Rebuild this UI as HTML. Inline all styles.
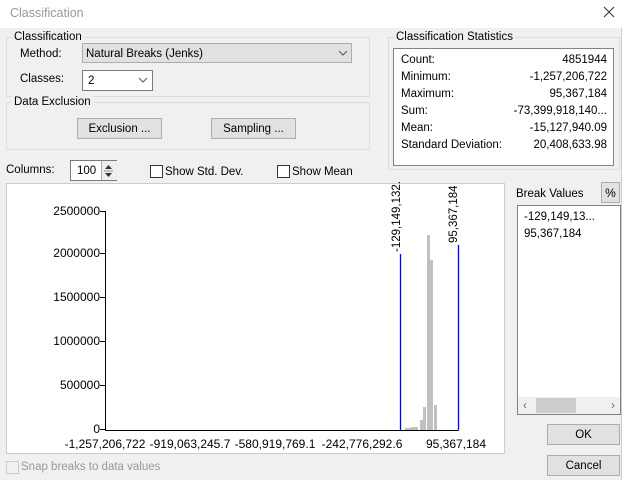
<!DOCTYPE html><html><head><style>
body{margin:0;width:630px;height:480px;background:#f0f0f0;font-family:"Liberation Sans",sans-serif;font-size:11px;color:#000;position:relative;overflow:hidden}
.a{position:absolute}
.grp{position:absolute;border:1px solid #dcdcdc}
.lg{position:absolute;background:#f0f0f0;padding:0 2px;font-size:11.5px}
.btn{position:absolute;background:#e1e1e1;border:1px solid #adadad;text-align:center;box-sizing:border-box;font-size:11.5px}
.cb{position:absolute;width:11px;height:11px;border:1px solid #333;background:#fff}
</style></head><body>
<div class="a" style="left:0;top:0;width:630px;height:28px;background:#fff"></div>
<div class="a" style="left:10px;top:6px;font-size:12.5px;color:#999">Classification</div>
<svg class="a" style="left:603px;top:6px" width="12" height="12"><path d="M1 1L11 11M11 1L1 11" stroke="#444" stroke-width="1.2"/></svg>
<div class="a" style="left:621px;top:28px;width:9px;height:452px;background:#fff;border-left:1px solid #ccc"></div>

<div class="grp" style="left:6px;top:37px;width:362px;height:58px"></div>
<div class="lg" style="left:12px;top:31px">Classification</div>
<div class="a" style="left:20px;top:48px;font-size:11.5px">Method:</div>
<div class="a" style="left:82px;top:43px;width:270px;height:20px;background:#e1e1e1;border:1px solid #adadad;box-sizing:border-box;padding:4px 3px;font-size:11.5px">Natural Breaks (Jenks)</div>
<svg class="a" style="left:338px;top:50px" width="10" height="6"><path d="M1 1L5 5L9 1" stroke="#555" fill="none"/></svg>
<div class="a" style="left:20px;top:73px;font-size:11.5px">Classes:</div>
<div class="a" style="left:82px;top:70px;width:71px;height:21px;background:#fff;border:1px solid #7a7a7a;box-sizing:border-box;padding:4px 5px;font-size:11.5px">2</div>
<svg class="a" style="left:138px;top:77px" width="10" height="6"><path d="M1 1L5 5L9 1" stroke="#555" fill="none"/></svg>

<div class="grp" style="left:6px;top:102px;width:362px;height:46px"></div>
<div class="lg" style="left:12px;top:96px">Data Exclusion</div>
<div class="btn" style="left:77px;top:118px;width:85px;height:21px;padding-top:4px">Exclusion ...</div>
<div class="btn" style="left:211px;top:118px;width:85px;height:21px;padding-top:4px">Sampling ...</div>

<div class="grp" style="left:388px;top:37px;width:230px;height:131px"></div>
<div class="lg" style="left:394px;top:31px">Classification Statistics</div>
<div class="a" style="left:393px;top:48px;width:221px;height:118px;background:#fff;border:1px solid #828282;box-sizing:border-box;font-size:11.5px;line-height:17px">
<div class="a" style="left:7px;top:3px">Count:<br>Minimum:<br>Maximum:<br>Sum:<br>Mean:<br>Standard Deviation:</div>
<div class="a" style="right:6px;top:3px;text-align:right">4851944<br>-1,257,206,722<br>95,367,184<br>-73,399,918,140...<br>-15,127,940.09<br>20,408,633.98</div>
</div>

<div class="a" style="left:6px;top:164px;font-size:11.5px">Columns:</div>
<div class="a" style="left:70px;top:160px;width:47px;height:21px;background:#fff;border:1px solid #7a7a7a;box-sizing:border-box"><span class="a" style="left:6px;top:4px;font-size:11.5px">100</span><div class="a" style="left:30px;top:0;width:15px;height:19px;background:#eee;border-left:1px solid #aaa"></div>
<svg class="a" style="left:33px;top:3px" width="9" height="14"><path d="M1 5L4.5 1L8 5ZM1 9L4.5 13L8 9Z" fill="#333"/><path d="M0 7H9" stroke="#999"/></svg></div>
<div class="cb" style="left:150px;top:165px"></div><div class="a" style="left:165px;top:166px;font-size:11.5px">Show Std. Dev.</div>
<div class="cb" style="left:277px;top:165px"></div><div class="a" style="left:292px;top:166px;font-size:11.5px">Show Mean</div>

<div class="a" style="left:6px;top:183px;width:499px;height:271px;background:#fff;border:1px solid #ccc;box-sizing:border-box"></div>
<svg class="a" style="left:0;top:0" width="630" height="480" font-family="Liberation Sans" font-size="12">
<g stroke="#000" stroke-width="1" fill="none">
<path d="M105.5 211V430.5H458.5"/>
<path d="M100 211.5H106M100 253.5H106M100 297.5H106M100 341.5H106M100 385.5H106M100 429.5H106"/>
</g>
<g text-anchor="end"><text x="100" y="215">2500000</text><text x="100" y="257">2000000</text><text x="100" y="301">1500000</text><text x="100" y="345">1000000</text><text x="100" y="389">500000</text><text x="100" y="433">0</text></g>
<g fill="#c0c0c0">
<rect x="405" y="428" width="6" height="2"/><rect x="411" y="427" width="7" height="3"/><rect x="420" y="420" width="3" height="10"/><rect x="423" y="407" width="3" height="23"/><rect x="427" y="235" width="3" height="195"/><rect x="430" y="260" width="3" height="170"/><rect x="434" y="405" width="3" height="25"/>
</g>
<path d="M400.5 254V430M458.5 245V430" stroke="#0000ff" stroke-width="1.3"/>
<text transform="translate(400,252) rotate(-90)" font-size="11.5">-129,149,132.</text>
<text transform="translate(457,243) rotate(-90)" font-size="11.5">95,367,184</text>
<g text-anchor="middle"><text x="105" y="448">-1,257,206,722</text><text x="190" y="448">-919,063,245.7</text><text x="275" y="448">-580,919,769.1</text><text x="362" y="448">-242,776,292.6</text><text x="456" y="448">95,367,184</text></g>
</svg>

<div class="a" style="left:516px;top:188px;font-size:11.5px">Break Values</div>
<div class="btn" style="left:601px;top:182px;width:19px;height:21px;padding-top:3px;font-size:12px">%</div>
<div class="a" style="left:517px;top:205px;width:104px;height:210px;background:#fff;border:1px solid #828282;box-sizing:border-box;font-size:11.5px;line-height:17px">
<div class="a" style="left:6px;top:3px">-129,149,13...<br>95,367,184</div>
<div class="a" style="left:0;bottom:0;width:102px;height:17px;background:#f0f0f0"><div class="a" style="left:18px;top:1px;width:40px;height:15px;background:#cdcdcd"></div><span class="a" style="left:5px;top:1px;color:#666">&lsaquo;</span><span class="a" style="right:5px;top:1px;color:#666">&rsaquo;</span></div>
</div>
<div class="btn" style="left:547px;top:424px;width:73px;height:21px;padding-top:4px">OK</div>
<div class="btn" style="left:547px;top:455px;width:73px;height:21px;padding-top:4px">Cancel</div>
<div class="a" style="left:6px;top:461px;width:11px;height:11px;border:1px solid #ccc"></div>
<div class="a" style="left:21px;top:461px;color:#999;font-size:11.5px">Snap breaks to data values</div>
</body></html>
